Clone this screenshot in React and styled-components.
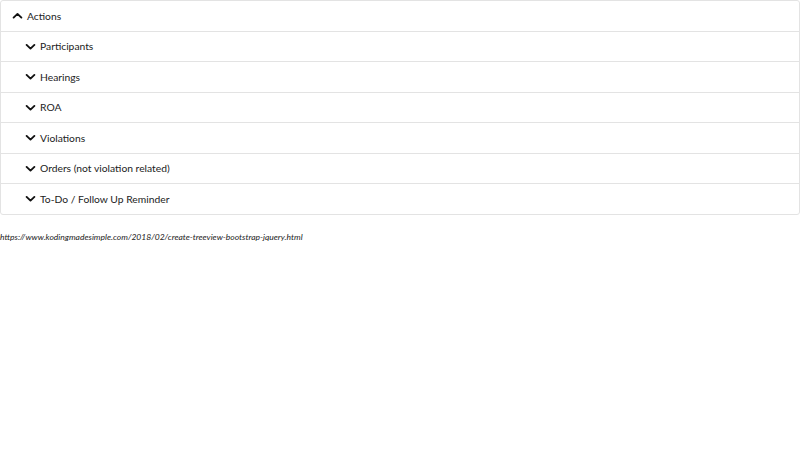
import React from "react";
import styled, { createGlobalStyle } from "styled-components";

const Global = createGlobalStyle`
  html, body { margin: 0; padding: 0; background: #fff; }
  body { font-family: Lato, "Noto Sans", sans-serif; color: #212529; }
`;

const Tree = styled.ul`
  list-style: none;
  margin: 0;
  padding: 0;
  border: 1px solid #e3e3e3;
  border-radius: 3px;
  overflow: hidden;
`;

const Item = styled.li`
  display: flex;
  align-items: center;
  gap: 4px;
  height: 29.5px;
  padding-left: ${(p) => (p.$level ? 24 : 11)}px;
  font-size: 10.3px;
  color: #222;
  border-top: ${(p) => (p.$first ? "none" : "1px solid #e3e3e3")};
  box-sizing: content-box;
`;

const Chevron = styled.svg`
  width: 11px;
  height: 11px;
  flex: none;
`;

const Link = styled.p`
  margin: 17px 0 0;
  font-size: 8.5px;
  font-style: italic;
  color: #222;
`;

const Icon = ({ up }) => (
  <Chevron viewBox="0 0 11 11">
    <path
      d={up ? "M1.6 7.6 L5.5 3.9 L9.4 7.6" : "M1.6 3.9 L5.5 7.6 L9.4 3.9"}
      fill="none"
      stroke="#111"
      strokeWidth="1.9"
      strokeLinecap="round"
      strokeLinejoin="round"
    />
  </Chevron>
);

const children = [
  "Participants",
  "Hearings",
  "ROA",
  "Violations",
  "Orders (not violation related)",
  "To-Do / Follow Up Reminder",
];

export default function App() {
  return (
    <>
      <Global />
      <Tree>
        <Item $first>
          <Icon up />
          Actions
        </Item>
        {children.map((c) => (
          <Item key={c} $level={1}>
            <Icon />
            {c}
          </Item>
        ))}
      </Tree>
      <Link>https://www.kodingmadesimple.com/2018/02/create-treeview-bootstrap-jquery.html</Link>
    </>
  );
}
